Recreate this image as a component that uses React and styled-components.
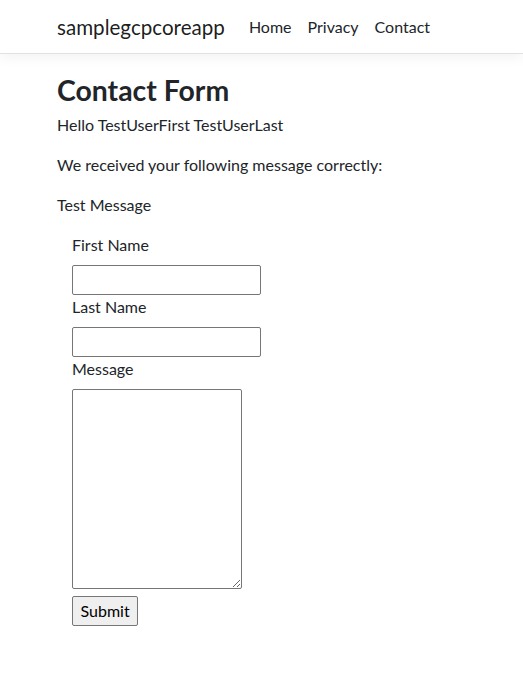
import React from "react";
import styled, { createGlobalStyle } from "styled-components";

const Global = createGlobalStyle`
  html, body { margin: 0; padding: 0; background: #fff; }
  body {
    font-family: Lato, "Segoe UI", sans-serif;
    font-size: 16px;
    line-height: 1.5;
    color: #212529;
  }
  *, *::before, *::after { box-sizing: border-box; }
`;

const Navbar = styled.nav`
  height: 54px;
  display: flex;
  align-items: center;
  padding: 0 57px;
  border-bottom: 1px solid #dee2e6;
  box-shadow: 0 4px 12px rgba(0, 0, 0, 0.05);
  margin-bottom: 18px;
`;

const Brand = styled.a`
  font-size: 20.6px;
  line-height: 30px;
  color: rgba(0, 0, 0, 0.9);
  text-decoration: none;
  margin-right: 16px;
`;

const NavList = styled.ul`
  display: flex;
  list-style: none;
  margin: 0;
  padding: 0;
`;

const NavLink = styled.a`
  display: block;
  padding: 8px;
  color: #212529;
  text-decoration: none;
  font-size: 16px;
`;

const Main = styled.main`
  padding: 0 57px 16px;
`;

const Title = styled.h1`
  font-size: 28.4px;
  font-weight: 700;
  line-height: 1.2;
  padding-top: 1px;
  margin: 0 0 6px;
`;

const Para = styled.p`
  margin: 0 0 16px;
`;

const Form = styled.form`
  padding-left: 15px;
  display: flex;
  flex-direction: column;
  align-items: flex-start;
`;

const Label = styled.label`
  display: block;
  margin-bottom: 8px;
`;

const TextInput = styled.input`
  width: 189px;
  height: 30px;
  border: 1px solid #767676;
  border-radius: 2px;
  padding: 1px 2px;
  font: inherit;
  display: block;
`;

const TextArea = styled.textarea`
  width: 170px;
  height: 200px;
  border: 1px solid #767676;
  border-radius: 2px;
  padding: 2px;
  font: inherit;
  display: block;
  margin-bottom: 7px;
`;

const Button = styled.button`
  height: 30px;
  padding: 0 7.5px;
  font: inherit;
  font-size: 16px;
  line-height: 24px;
  color: #000;
  background: #efefef;
  border: 1px solid #767676;
  border-radius: 2px;
`;

export default function App() {
  return (
    <>
      <Global />
      <header>
        <Navbar>
          <Brand href="#">samplegcpcoreapp</Brand>
          <NavList>
            <li><NavLink href="#">Home</NavLink></li>
            <li><NavLink href="#">Privacy</NavLink></li>
            <li><NavLink href="#">Contact</NavLink></li>
          </NavList>
        </Navbar>
      </header>
      <Main>
        <Title>Contact Form</Title>
        <Para>Hello TestUserFirst TestUserLast</Para>
        <Para>We received your following message correctly:</Para>
        <Para>Test Message</Para>
        <Form onSubmit={(e) => e.preventDefault()}>
          <Label htmlFor="first">First Name</Label>
          <TextInput id="first" type="text" />
          <Label htmlFor="last">Last Name</Label>
          <TextInput id="last" type="text" />
          <Label htmlFor="msg">Message</Label>
          <TextArea id="msg" />
          <Button type="submit">Submit</Button>
        </Form>
      </Main>
    </>
  );
}
